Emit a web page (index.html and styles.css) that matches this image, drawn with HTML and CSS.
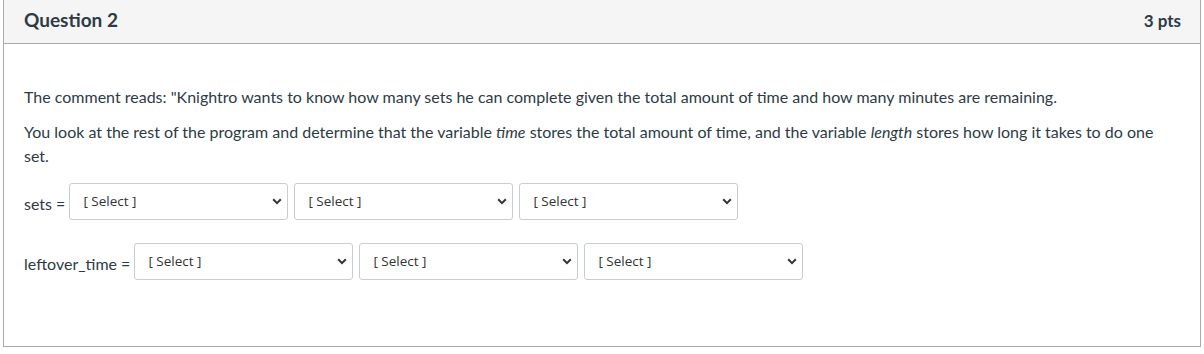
FILE: index.html
```html
<!DOCTYPE html>
<html>
<head>
<meta charset="utf-8">
<link rel="stylesheet" href="styles.css">
</head>
<body>
<div class="question">
  <div class="header">
    <span class="title">Question 2</span>
    <span class="pts">3 pts</span>
  </div>
  <div class="content">
    <p class="para1">The comment reads: "Knightro wants to know how many sets he can complete given the total amount of time and how many minutes are remaining.</p>
    <p class="para2">You look at the rest of the program and determine that the variable <em>time</em> stores the total amount of time, and the variable <em>length</em> stores how long it takes to do one set.</p>
    <div class="row row1">
      <span class="label">sets =</span>
      <div class="sel"><span class="sel-text">[ Select ]</span><svg class="chev" width="10" height="7" viewBox="0 0 10 7"><path d="M1.2 1.3 L5 5.1 L8.8 1.3" fill="none" stroke="#333" stroke-width="2"/></svg></div>
      <div class="sel"><span class="sel-text">[ Select ]</span><svg class="chev" width="10" height="7" viewBox="0 0 10 7"><path d="M1.2 1.3 L5 5.1 L8.8 1.3" fill="none" stroke="#333" stroke-width="2"/></svg></div>
      <div class="sel"><span class="sel-text">[ Select ]</span><svg class="chev" width="10" height="7" viewBox="0 0 10 7"><path d="M1.2 1.3 L5 5.1 L8.8 1.3" fill="none" stroke="#333" stroke-width="2"/></svg></div>
    </div>
    <div class="row row2">
      <span class="label">leftover_time =</span>
      <div class="sel"><span class="sel-text">[ Select ]</span><svg class="chev" width="10" height="7" viewBox="0 0 10 7"><path d="M1.2 1.3 L5 5.1 L8.8 1.3" fill="none" stroke="#333" stroke-width="2"/></svg></div>
      <div class="sel"><span class="sel-text">[ Select ]</span><svg class="chev" width="10" height="7" viewBox="0 0 10 7"><path d="M1.2 1.3 L5 5.1 L8.8 1.3" fill="none" stroke="#333" stroke-width="2"/></svg></div>
      <div class="sel"><span class="sel-text">[ Select ]</span><svg class="chev" width="10" height="7" viewBox="0 0 10 7"><path d="M1.2 1.3 L5 5.1 L8.8 1.3" fill="none" stroke="#333" stroke-width="2"/></svg></div>
    </div>
  </div>
</div>
</body>
</html>
```

FILE: styles.css
```css
html, body {
  margin: 0;
  padding: 0;
  background: #fff;
}
body {
  font-family: Lato, "Liberation Sans", sans-serif;
  color: #2d3b45;
}
.question {
  margin: 0 3px;
  width: 1196px;
  height: 346px;
  border: 1px solid #aaaaaa;
  border-top: none;
  box-sizing: content-box;
}
.header {
  height: 44px;
  background: #f5f5f5;
  border-bottom: 1px solid #aaaaaa;
  display: flex;
  align-items: center;
  justify-content: space-between;
  padding: 0 19px 0 20px;
  box-sizing: border-box;
}
.title {
  font-weight: 700;
  font-size: 19px;
  position: relative;
  top: -2px;
}
.pts {
  font-weight: 700;
  font-size: 17px;
  position: relative;
  top: -1px;
}
.content {
  padding: 41px 40px 0 20px;
}
p {
  margin: 0;
  font-size: 16px;
  line-height: 24px;
}
.para2 {
  margin-top: 11px;
}
.row {
  display: flex;
  align-items: center;
  gap: 6px;
}
.row1 {
  margin-top: 15px;
}
.row2 {
  margin-top: 23px;
}
.label {
  font-size: 16px;
  padding-top: 4px;
  margin-right: -2px;
}
.sel {
  width: 219px;
  height: 37px;
  box-sizing: border-box;
  border: 1px solid #c7cdd1;
  border-radius: 3px;
  background: #fff;
  display: flex;
  align-items: center;
  justify-content: space-between;
  padding: 0 5px 0 13px;
}
.sel-text {
  font-family: "Open Sans", "DejaVu Sans", sans-serif;
  font-size: 13.5px;
  color: #333;
  position: relative;
  top: -1px;
}
.chev {
  display: block;
}
```
